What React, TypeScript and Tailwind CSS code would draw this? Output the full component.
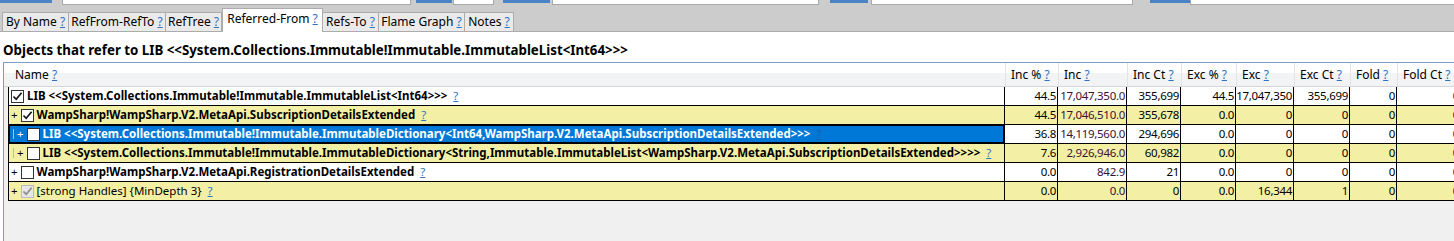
import { Fragment } from "react";

type Row = {
  name: string;
  vals: string[];
  expand?: boolean;
  line?: string;
  checked?: boolean;
  disabled?: boolean;
  bold?: boolean;
  selected?: boolean;
};

const rows: Row[] = [
  {
    name: "LIB <<System.Collections.Immutable!Immutable.ImmutableList<Int64>>>",
    vals: ["44.5", "17,047,350.0", "355,699", "44.5", "17,047,350", "355,699", "0", "0"],
    checked: true,
    bold: true,
  },
  {
    name: "WampSharp!WampSharp.V2.MetaApi.SubscriptionDetailsExtended",
    vals: ["44.5", "17,046,510.0", "355,678", "0.0", "0", "0", "0", "0"],
    expand: true,
    checked: true,
    bold: true,
  },
  {
    name: "LIB <<System.Collections.Immutable!Immutable.ImmutableDictionary<Int64,WampSharp.V2.MetaApi.SubscriptionDetailsExtended>>>",
    vals: ["36.8", "14,119,560.0", "294,696", "0.0", "0", "0", "0", "0"],
    expand: true,
    line: "bg-[#e9a8c4]",
    bold: true,
    selected: true,
  },
  {
    name: "LIB <<System.Collections.Immutable!Immutable.ImmutableDictionary<String,Immutable.ImmutableList<WampSharp.V2.MetaApi.SubscriptionDetailsExtended>>>>",
    vals: ["7.6", "2,926,946.0", "60,982", "0.0", "0", "0", "0", "0"],
    expand: true,
    line: "bg-[#b7c96a]",
    bold: true,
  },
  {
    name: "WampSharp!WampSharp.V2.MetaApi.RegistrationDetailsExtended",
    vals: ["0.0", "842.9", "21", "0.0", "0", "0", "0", "0"],
    expand: true,
    bold: true,
  },
  {
    name: "[strong Handles] {MinDepth 3}",
    vals: ["0.0", "0.0", "0", "0.0", "16,344", "1", "0", "0"],
    expand: true,
    checked: true,
    disabled: true,
  },
];

const cols = [
  { title: "Inc %", w: "w-[53px]" },
  { title: "Inc", w: "w-[69px]" },
  { title: "Inc Ct", w: "w-[54px]" },
  { title: "Exc %", w: "w-[55px]" },
  { title: "Exc", w: "w-[58px]" },
  { title: "Exc Ct", w: "w-[56px]" },
  { title: "Fold", w: "w-[47px]" },
  { title: "Fold Ct", w: "w-[64px]" },
];

const tabs = [
  { label: "By Name", w: "w-[67px]" },
  { label: "RefFrom-RefTo", w: "w-[98px]" },
  { label: "RefTree", w: "w-[57px]" },
  { label: "Referred-From", w: "w-[101px]", active: true },
  { label: "Refs-To", w: "w-[57px]" },
  { label: "Flame Graph", w: "w-[87px]" },
  { label: "Notes", w: "w-[50px]" },
];

const Help = ({ light }: { light?: boolean }) => (
  <span className={`underline font-normal ${light ? "text-[#1f5fae]" : "text-[#2f72c4]"}`}>?</span>
);

const CheckBox = ({ checked, disabled }: { checked?: boolean; disabled?: boolean }) => (
  <span
    className={`flex h-[13px] w-[13px] shrink-0 items-center justify-center border ${
      disabled ? "border-[#bcbcbc] bg-[#e6e6e6]" : "border-[#333333] bg-white"
    }`}
  >
    {checked && (
      <svg width="11" height="11" viewBox="0 0 11 11">
        <path
          d="M1.5 5.5 L4.2 8.3 L9.6 1.8"
          fill="none"
          stroke={disabled ? "#8a8a8a" : "#111111"}
          strokeWidth="1.6"
        />
      </svg>
    )}
  </span>
);

const App = () => {
  return (
    <div className="h-[241px] w-[1454px] overflow-hidden bg-white font-['Segoe_UI','Noto_Sans',sans-serif] text-[12px] text-black">
      <div className="flex h-[32px] flex-col bg-[#cccccc]">
        <div className="flex h-[5px] items-start">
          <div className="h-[3px] w-[52px] bg-[#4a84c6]" />
          <div className="ml-[10px] h-[5px] w-[349px] border-x border-b border-[#a9a9a9] bg-white" />
          <div className="ml-[5px] h-[3px] w-[36px] bg-[#4a84c6]" />
          <div className="ml-[1px] h-[5px] w-[41px] border-x border-b border-[#a9a9a9] bg-white" />
          <div className="ml-[9px] h-[3px] w-[47px] bg-[#4a84c6]" />
          <div className="ml-[2px] h-[5px] w-[267px] border-x border-b border-[#a9a9a9] bg-white" />
          <div className="ml-[11px] h-[3px] w-[38px] bg-[#4a84c6]" />
          <div className="ml-[3px] h-[5px] w-[262px] border-x border-b border-[#a9a9a9] bg-white" />
          <div className="ml-[17px] h-[3px] w-[40px] bg-[#4a84c6]" />
          <div className="h-[5px] flex-1 border-l border-b border-[#a9a9a9] bg-white" />
        </div>
        <div className="flex flex-1 items-end border-b border-[#acacac] pl-[2px]">
          {tabs.map((t) => (
            <div
              key={t.label}
              className={`${t.w} flex items-center justify-center whitespace-nowrap border-x border-t border-[#acacac] ${
                t.active
                  ? "relative z-10 -mb-px h-[24px] bg-white pb-[3px]"
                  : "-ml-px h-[19px] bg-[#eaeaea] first:ml-0"
              }`}
            >
              {t.label}&nbsp;<Help />
            </div>
          ))}
        </div>
      </div>

      <div className="flex h-[30px] items-end pb-[1px] pl-[3px] text-[13.3px] font-bold">
        Objects that refer to LIB &lt;&lt;System.Collections.Immutable!Immutable.ImmutableList&lt;Int64&gt;&gt;&gt;
      </div>

      <div className="ml-[3px] h-[179px] border-l border-t border-[#7c9dc4] bg-[#f0f0f0]">
        <div className="flex h-[24px] border-b border-[#d5d5d5] bg-[linear-gradient(to_bottom,#ffffff_0%,#ffffff_42%,#f2f3f5_42%,#f2f3f5_100%)]">
          <div className="flex w-[1002px] shrink-0 items-center border-r border-[#e3e4e6] pl-[11px]">
            Name&nbsp;<Help />
          </div>
          {cols.map((c) => (
            <div
              key={c.title}
              className={`${c.w} flex shrink-0 items-center whitespace-nowrap border-r border-[#e3e4e6] pl-[5px]`}
            >
              {c.title}&nbsp;<Help />
            </div>
          ))}
        </div>

        {rows.map((r, i) => (
          <div
            key={i}
            className={`ml-[4px] flex h-[19px] border-b border-l border-black text-[11.5px] ${
              i % 2 === 1 ? "bg-[#f3f0a6]" : "bg-white"
            }`}
          >
            <div
              className={`flex w-[996px] shrink-0 items-center gap-[3px] overflow-hidden whitespace-nowrap border-r border-black pl-[2px] ${
                r.selected ? "bg-[#0078d7] text-white shadow-[inset_0_0_0_1px_#000]" : ""
              } ${r.bold ? "font-bold" : ""}`}
            >
              {r.line && <span className={`ml-[2px] h-[10px] w-px ${r.line}`} />}
              {r.expand && (
                <span className={`font-normal leading-none ${r.selected ? "text-white" : "text-black"}`}>+</span>
              )}
              <CheckBox checked={r.checked} disabled={r.disabled} />
              <span>
                {r.name}&nbsp;&nbsp;<Help light={r.selected} />
              </span>
            </div>
            {r.vals.map((v, j) => (
              <Fragment key={j}>
                <div
                  className={`${cols[j].w} flex shrink-0 items-center justify-end whitespace-nowrap border-r border-black pr-[1px] tracking-[-0.3px] ${
                    j === 1 ? "text-[#3a1233]" : ""
                  }`}
                >
                  {v}
                </div>
              </Fragment>
            ))}
          </div>
        ))}
      </div>
    </div>
  );
};

export default App;
